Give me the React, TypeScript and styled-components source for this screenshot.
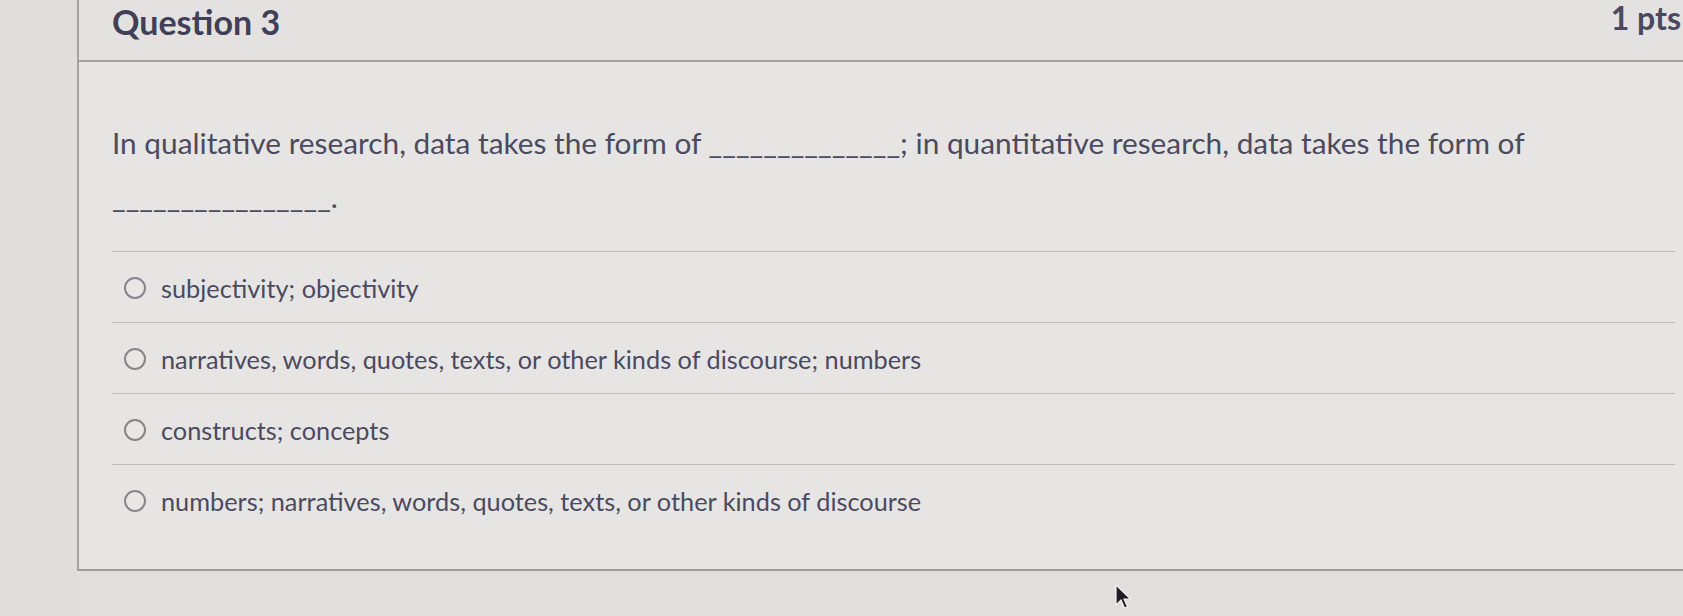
import React from "react";
import styled, { createGlobalStyle } from "styled-components";

const GlobalStyle = createGlobalStyle`
  html, body {
    margin: 0;
    padding: 0;
    background: #e3e2e0;
    font-family: Lato, "Open Sans", sans-serif;
    overflow: hidden;
  }
`;

const Page = styled.div`
  position: relative;
  display: flex;
  width: 1683px;
  height: 616px;
  background: #e0dfdd;
`;

const Gutter = styled.div`
  width: 77px;
  flex: none;
  background: #dfdedc;
`;

const Panel = styled.section`
  flex: 1;
  align-self: flex-start;
  display: flex;
  flex-direction: column;
  background: #e6e5e3;
  border-left: 2px solid #a3a3a6;
  border-bottom: 2px solid #9d9da0;
`;

const Header = styled.header`
  display: flex;
  justify-content: space-between;
  align-items: center;
  height: 60px;
  padding: 0 2px 0 33px;
  border-bottom: 2px solid #a2a2a4;
  background: #e3e2e0;
`;

const Title = styled.h2`
  margin: 0;
  font-size: 34px;
  font-weight: 700;
  color: #413f57;
  margin-top: -18px;
`;

const Points = styled.span`
  font-size: 32px;
  font-weight: 700;
  color: #4a4960;
  margin-top: -26px;
`;

const Body = styled.div`
  padding: 54px 8px 0 33px;
`;

const QuestionText = styled.p`
  margin: 0;
  font-size: 29.8px;
  line-height: 54px;
  color: #4b4a60;
`;

const Answers = styled.div`
  margin-top: 27px;
  padding-bottom: 34px;
`;

const Answer = styled.label`
  display: flex;
  align-items: center;
  gap: 15px;
  padding: 22px 0 20px 12px;
  border-top: 1px solid #bcbcbe;
  font-size: 25.3px;
  line-height: 28px;
  color: #4b4a60;
`;

const Radio = styled.span`
  width: 18px;
  height: 18px;
  border: 2px solid #86868b;
  border-radius: 50%;
  flex: none;
  background: #e8e7e5;
`;

const Cursor = styled.svg`
  position: absolute;
  left: 1114px;
  top: 584px;
  width: 18px;
  height: 28px;
`;

const answers = [
  "subjectivity; objectivity",
  "narratives, words, quotes, texts, or other kinds of discourse; numbers",
  "constructs; concepts",
  "numbers; narratives, words, quotes, texts, or other kinds of discourse",
];

export default function App() {
  return (
    <>
      <GlobalStyle />
      <Page>
        <Gutter />
        <Panel>
          <Header>
            <Title>Question 3</Title>
            <Points>1 pts</Points>
          </Header>
          <Body>
            <QuestionText>
              In qualitative research, data takes the form of ______________; in
              quantitative research, data takes the form of ________________.
            </QuestionText>
            <Answers>
              {answers.map((a) => (
                <Answer key={a}>
                  <Radio />
                  {a}
                </Answer>
              ))}
            </Answers>
          </Body>
        </Panel>
        <Cursor viewBox="0 0 18 28">
          <path
            d="M2 1 L2 21 L7 16 L10.5 24 L13.5 22.8 L10 15 L16.5 15 Z"
            fill="#1c1c22"
            stroke="#f2f2f2"
            strokeWidth="1.2"
          />
        </Cursor>
      </Page>
    </>
  );
}
